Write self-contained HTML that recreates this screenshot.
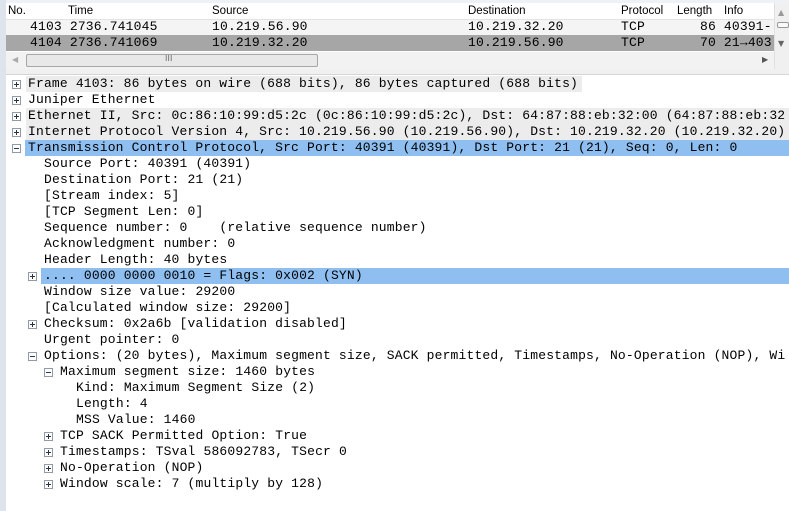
<!DOCTYPE html>
<html><head><meta charset="utf-8"><style>
html,body{margin:0;width:789px;height:511px;overflow:hidden}
body{background:#fff;position:relative;font-family:"Liberation Mono",monospace;font-size:13px;letter-spacing:0.17px;color:#000}
.a{position:absolute;white-space:pre}
.hdr{font-family:"Liberation Sans",sans-serif;font-size:11.5px;letter-spacing:0}
.row{position:absolute;height:16px;line-height:16px;white-space:pre}
.clip{position:absolute;left:0;top:0;width:789px;height:511px;overflow:hidden}
.box{position:absolute;width:7px;height:7px;border:1px solid #8d9bab;background:#fff;font-size:0}
.box:before{content:"";position:absolute;left:1px;top:3px;width:5px;height:1px;background:#333}
.box.p:after{content:"";position:absolute;left:3px;top:1px;width:1px;height:5px;background:#333}
</style></head><body><div class="clip">
<div class="a" style="left:0;top:0;width:6px;height:511px;background:#dde4ec"></div>
<div class="a" style="left:6px;top:0;width:783px;height:3px;background:#eef1f5"></div>
<div class="a hdr" style="left:6px;top:3px;width:768px;height:16px;background:#fff;border-bottom:1px solid #e3e3e3"></div>
<div class="a hdr" style="left:8px;top:5px">No.</div>
<div class="a hdr" style="left:68px;top:5px">Time</div>
<div class="a hdr" style="left:212px;top:5px">Source</div>
<div class="a hdr" style="left:468px;top:5px">Destination</div>
<div class="a hdr" style="left:621px;top:5px">Protocol</div>
<div class="a hdr" style="left:677px;top:5px">Length</div>
<div class="a hdr" style="left:724px;top:5px">Info</div>
<div class="a" style="left:6px;top:20px;width:768px;height:15px;background:#f4f4f4"></div>
<div class="a" style="left:6px;top:35px;width:768px;height:16px;background:#a6a6a6"></div>
<div class="row" style="left:30px;top:19px">4103 2736.741045</div>
<div class="row" style="left:212px;top:19px">10.219.56.90</div>
<div class="row" style="left:468px;top:19px">10.219.32.20</div>
<div class="row" style="left:621px;top:19px">TCP</div>
<div class="row" style="left:700px;top:19px;width:74px;overflow:hidden">86 40391-</div>
<div class="row" style="left:30px;top:35px">4104 2736.741069</div>
<div class="row" style="left:212px;top:35px">10.219.32.20</div>
<div class="row" style="left:468px;top:35px">10.219.56.90</div>
<div class="row" style="left:621px;top:35px">TCP</div>
<div class="row" style="left:700px;top:35px;width:74px;overflow:hidden">70 21→403</div>
<div class="a" style="left:774px;top:3px;width:15px;height:66px;background:#f0f0f0;border-left:1px solid #e0e0e0"></div>
<div class="a" style="left:777px;top:22px;width:10px;height:4px;border:1px solid #999;border-radius:2px;background:#fafafa"></div>
<div class="a" style="left:778px;top:8px;font-size:8px;color:#999;font-family:'DejaVu Sans'">▲</div>
<div class="a" style="left:778px;top:39px;font-size:8px;color:#666;font-family:'DejaVu Sans'">▼</div>
<div class="a" style="left:6px;top:52px;width:768px;height:17px;background:#f2f2f2"></div>
<div class="a" style="left:26px;top:54px;width:290px;height:11px;border:1px solid #a7a7a7;border-radius:2px;background:#e8e8e8"></div>
<div class="a" style="left:165px;top:54px;font-size:8px;color:#666;font-family:'DejaVu Sans'">III</div>
<div class="a" style="left:12px;top:55px;font-size:8px;color:#aaa;font-family:'DejaVu Sans'">◀</div>
<div class="a" style="left:762px;top:55px;font-size:8px;color:#555;font-family:'DejaVu Sans'">▶</div>
<div class="a" style="left:6px;top:69px;width:783px;height:5px;background:#f0f0f0;border-bottom:1px solid #d5d5d5"></div>
<div class="a" style="left:26px;top:76px;width:556px;height:16px;background:#ececec"></div>
<div class="a" style="left:26px;top:108px;width:763px;height:32px;background:#ececec"></div>
<div class="a" style="left:25px;top:140px;width:764px;height:16px;background:#8fbff0"></div>
<div class="a" style="left:41px;top:268px;width:748px;height:16px;background:#8fbff0"></div>

<div class="box p" style="left:12px;top:80px"></div><div class="row" style="left:28px;top:76px">Frame 4103: 86 bytes on wire (688 bits), 86 bytes captured (688 bits)</div>
<div class="box p" style="left:12px;top:96px"></div><div class="row" style="left:28px;top:92px">Juniper Ethernet</div>
<div class="box p" style="left:12px;top:112px"></div><div class="row" style="left:28px;top:108px">Ethernet II, Src: 0c:86:10:99:d5:2c (0c:86:10:99:d5:2c), Dst: 64:87:88:eb:32:00 (64:87:88:eb:32</div>
<div class="box p" style="left:12px;top:128px"></div><div class="row" style="left:28px;top:124px">Internet Protocol Version 4, Src: 10.219.56.90 (10.219.56.90), Dst: 10.219.32.20 (10.219.32.20)</div>
<div class="box" style="left:12px;top:144px"></div><div class="row" style="left:28px;top:140px">Transmission Control Protocol, Src Port: 40391 (40391), Dst Port: 21 (21), Seq: 0, Len: 0</div>
<div class="row" style="left:44px;top:156px">Source Port: 40391 (40391)</div>
<div class="row" style="left:44px;top:172px">Destination Port: 21 (21)</div>
<div class="row" style="left:44px;top:188px">[Stream index: 5]</div>
<div class="row" style="left:44px;top:204px">[TCP Segment Len: 0]</div>
<div class="row" style="left:44px;top:220px">Sequence number: 0    (relative sequence number)</div>
<div class="row" style="left:44px;top:236px">Acknowledgment number: 0</div>
<div class="row" style="left:44px;top:252px">Header Length: 40 bytes</div>
<div class="box p" style="left:28px;top:272px"></div><div class="row" style="left:44px;top:268px">.... 0000 0000 0010 = Flags: 0x002 (SYN)</div>
<div class="row" style="left:44px;top:284px">Window size value: 29200</div>
<div class="row" style="left:44px;top:300px">[Calculated window size: 29200]</div>
<div class="box p" style="left:28px;top:320px"></div><div class="row" style="left:44px;top:316px">Checksum: 0x2a6b [validation disabled]</div>
<div class="row" style="left:44px;top:332px">Urgent pointer: 0</div>
<div class="box" style="left:28px;top:352px"></div><div class="row" style="left:44px;top:348px">Options: (20 bytes), Maximum segment size, SACK permitted, Timestamps, No-Operation (NOP), Wi</div>
<div class="box" style="left:44px;top:368px"></div><div class="row" style="left:60px;top:364px">Maximum segment size: 1460 bytes</div>
<div class="row" style="left:76px;top:380px">Kind: Maximum Segment Size (2)</div>
<div class="row" style="left:76px;top:396px">Length: 4</div>
<div class="row" style="left:76px;top:412px">MSS Value: 1460</div>
<div class="box p" style="left:44px;top:432px"></div><div class="row" style="left:60px;top:428px">TCP SACK Permitted Option: True</div>
<div class="box p" style="left:44px;top:448px"></div><div class="row" style="left:60px;top:444px">Timestamps: TSval 586092783, TSecr 0</div>
<div class="box p" style="left:44px;top:464px"></div><div class="row" style="left:60px;top:460px">No-Operation (NOP)</div>
<div class="box p" style="left:44px;top:480px"></div><div class="row" style="left:60px;top:476px">Window scale: 7 (multiply by 128)</div>
</div></body></html>
